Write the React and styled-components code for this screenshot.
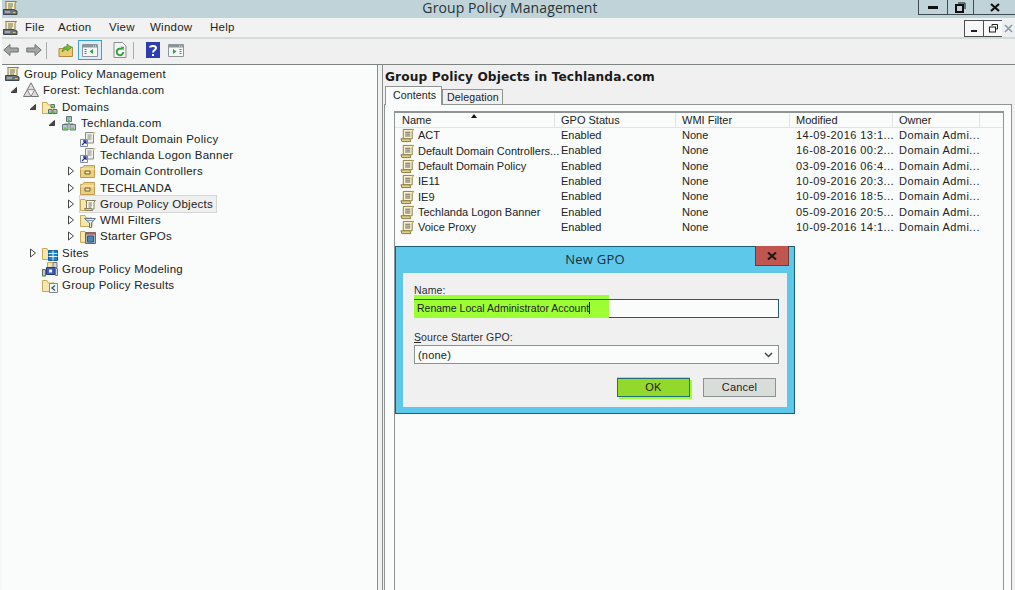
import React from 'react';
import styled, { createGlobalStyle } from 'styled-components';

const GlobalStyle = createGlobalStyle`
  html, body { margin: 0; padding: 0; background: #f0f0f0; }
  * { box-sizing: border-box; }
  body { font-family: "Liberation Sans", Arial, sans-serif; color: #222; }
`;

const Win = styled.div`
  position: relative;
  width: 1015px;
  height: 590px;
  overflow: hidden;
  display: flex;
  flex-direction: column;
  padding-left: 2px;
  background: #f7f9f8;
  font-size: 11.5px;
  letter-spacing: 0.25px;
`;

const TitleBar = styled.div`
  height: 18px;
  flex: none;
  display: flex;
  align-items: flex-start;
  background: #c0d3d8;
`;

const TitleIcon = styled.div`
  width: 16px;
  height: 16px;
  flex: none;
`;

const TitleText = styled.div`
  flex: 1;
  text-align: center;
  font-family: "Open Sans", sans-serif;
  font-size: 14px;
  line-height: 15px;
  letter-spacing: 0.1px;
  color: #2a3338;
  padding-left: 84px;
`;

const Caption = styled.div`
  display: flex;
  height: 15px;
  border-left: 1px solid #3d4a50;
  border-bottom: 1px solid #3d4a50;
`;

const CaptionBtn = styled.div`
  width: ${p => p.$w}px;
  display: flex;
  align-items: center;
  justify-content: center;
  border-left: ${p => (p.$first ? 'none' : '1px solid #3d4a50')};
`;

const MenuBar = styled.div`
  height: 21px;
  flex: none;
  display: flex;
  align-items: center;
  background: #f2f2f2;
  border-bottom: 2px solid #d4dad8;
`;

const MenuItems = styled.div`
  flex: 1;
  display: flex;
  align-items: center;
  margin: -1px 0 0 7px;
`;

const MenuItem = styled.span`
  width: ${p => p.$w}px;
`;

const ChildCaption = styled.div`
  display: flex;
  height: 17px;
  margin-bottom: -1px;
  background: #f0f0f0;
`;

const ChildBtn = styled.div`
  width: ${p => p.$w}px;
  display: flex;
  align-items: center;
  justify-content: center;
  background: ${p => (p.$off ? '#eceff0' : '#f8f8f8')};
  border: ${p => (p.$off ? 'none' : '1px solid #4a4f52')};
  margin-left: -1px;
`;

const Toolbar = styled.div`
  height: 26px;
  flex: none;
  display: flex;
  align-items: center;
  padding: 0 0 3px 1px;
  background: #f0f0f0;
  border-bottom: 1px solid #7d8482;
`;

const ToolBtn = styled.div`
  width: ${p => p.$w || 16}px;
  height: ${p => (p.$active ? 20 : 16)}px;
  margin-left: ${p => p.$ml || 0}px;
  flex: none;
  display: flex;
  align-items: center;
  justify-content: center;
  ${p => p.$active && 'background: #dcecf8; border: 1px solid #3b9fd8;'}
`;

const ToolSep = styled.div`
  width: 1px;
  height: 17px;
  margin-left: ${p => p.$ml}px;
  background: #a8acaa;
  flex: none;
`;

const Body = styled.div`
  flex: 1;
  display: flex;
  min-height: 0;
  background: #f0f0f0;
`;

const TreePane = styled.div`
  width: 376px;
  flex: none;
  background: #f9fcfa;
  border-right: 1px solid #8a8f8e;
  padding-top: 1px;
`;

const TreeRow = styled.div`
  height: 16.23px;
  display: flex;
  align-items: center;
  padding-left: ${p => 2 + 19 * p.$level}px;
  white-space: nowrap;
`;

const Twisty = styled.div`
  width: 13px;
  margin-left: -13px;
  flex: none;
  display: flex;
  justify-content: flex-start;
`;

const TreeLabel = styled.div`
  display: inline-flex;
  align-items: center;
  gap: 4px;
  height: 16px;
  padding-right: 3px;
  background: ${p => (p.$sel ? '#efefef' : 'transparent')};
  outline: ${p => (p.$sel ? '1px solid #d6d6d6' : 'none')};
`;

const DetailPane = styled.div`
  position: relative;
  flex: 1;
  margin: 0 3px 0 4px;
  border-left: 1px solid #8a8f8e;
  display: flex;
  flex-direction: column;
`;

const Heading = styled.div`
  height: 21px;
  padding: 5px 0 0 2px;
  font-family: "DejaVu Sans", sans-serif;
  font-weight: bold;
  font-size: 12.2px;
  line-height: 14px;
  letter-spacing: 0.1px;
  color: #1a1a1a;
`;

const Tabs = styled.div`
  display: flex;
  align-items: flex-end;
  height: 19px;
  padding-left: 2px;
  position: relative;
  z-index: 1;
  margin-bottom: -1px;
`;

const Tab = styled.div`
  width: ${p => p.$w}px;
  height: ${p => (p.$on ? 19 : 16)}px;
  padding: ${p => (p.$on ? '2px' : '1px')} 0 0 ${p => (p.$on ? 7 : 4)}px;
  background: ${p => (p.$on ? '#f9fcfa' : '#f0f0f0')};
  border: 1px solid #8f9593;
  border-bottom: ${p => (p.$on ? 'none' : '1px solid #8f9593')};
  font-size: 10.6px;
  letter-spacing: 0.1px;
`;

const TabBody = styled.div`
  flex: 1;
  background: #f9fcfa;
  border: 1px solid #8f9593;
  border-bottom: none;
  margin-left: 1px;
  padding: 6px 7px 0 9px;
  display: flex;
`;

const ListFrame = styled.div`
  flex: 1;
  border: 1px solid #8f9593;
  border-bottom: none;
  border-top-width: 2px;
  font-size: 11px;
  letter-spacing: 0;
`;

const cols = '160px 121px 114px 103px 87px 23px';

const ListHead = styled.div`
  display: grid;
  grid-template-columns: ${cols};
  height: 15px;
  border-bottom: 1px solid #dfe6e3;
`;

const HeadCell = styled.div`
  position: relative;
  padding-left: ${p => p.$pl || 6}px;
  line-height: 15px;
  border-right: 1px solid #dfe6e3;
`;

const SortMark = styled.div`
  position: absolute;
  left: 76px;
  top: 1px;
  width: 0;
  height: 0;
  border-left: 3.5px solid transparent;
  border-right: 3.5px solid transparent;
  border-bottom: 4px solid #111;
`;

const ListRow = styled.div`
  display: grid;
  grid-template-columns: ${cols};
  height: 15.35px;
  line-height: 15px;
  white-space: nowrap;
`;

const NameCell = styled.div`
  display: flex;
  align-items: center;
  gap: 3px;
  padding-left: 5px;
`;

const Cell = styled.div`
  padding-left: 6px;
  letter-spacing: ${p => (p.$wide ? '0.45px' : '0')};
`;

/* the New GPO dialog floats over the list */
const Dialog = styled.div`
  position: absolute;
  left: 12px;
  top: 181px;
  width: 400px;
  height: 168px;
  background: #5ec8ea;
  border: 1px solid #1c5f78;
  padding: 26px 7px 6px 7px;
  z-index: 5;
`;

const DialogTitle = styled.div`
  position: absolute;
  left: 0;
  right: 0;
  top: 4px;
  text-align: center;
  font-family: "Open Sans", sans-serif;
  font-size: 13px;
  line-height: 16px;
  color: #12303c;
`;

const CloseBtn = styled.div`
  position: absolute;
  right: 5px;
  top: -1px;
  width: 34px;
  height: 20px;
  background: #c0564f;
  border: 1px solid #6e3a36;
  border-top: none;
  display: flex;
  align-items: center;
  justify-content: center;
`;

const DialogBody = styled.div`
  height: 134px;
  background: #f0f0f0;
  padding: 9px 8px 0 11px;
  font-size: 11px;
  letter-spacing: 0.2px;
`;

const FieldLabel = styled.div`
  height: 16px;
  line-height: 16px;
  font-size: 10.5px;
  letter-spacing: 0.1px;
  color: #2c2c2c;
  u { text-decoration: underline; }
`;

const NameInput = styled.div`
  position: relative;
  height: 19px;
  margin: 1px 0 11px;
  background: #f9fcfa;
  border: 1px solid #1f5a85;
  padding-left: 2px;
  line-height: 17px;
  white-space: nowrap;
`;

const Marker = styled.div`
  position: absolute;
  left: -1px;
  top: -5px;
  width: 195px;
  height: 23px;
  background: #9cff33;
`;

const InputText = styled.span`
  position: relative;
  border-right: 1px solid #111;
  font-size: 10.5px;
  letter-spacing: 0;
`;

const InputLine = styled.div`
  position: absolute;
  left: -1px;
  top: -1px;
  width: 195px;
  height: 1px;
  background: #1f5a85;
`;

const SelectBox = styled.div`
  height: 19px;
  background: #f9fcfa;
  border: 1px solid #8d9290;
  display: flex;
  align-items: center;
  justify-content: space-between;
  padding: 0 5px 0 3px;
  margin-bottom: 14px;
`;

const Buttons = styled.div`
  display: flex;
  justify-content: flex-end;
  gap: 13px;
  padding-right: 3px;
`;

const Btn = styled.div`
  position: relative;
  width: 73px;
  height: 19px;
  line-height: 17px;
  text-align: center;
  background: ${p => (p.$ok ? '#93d92b' : '#d9ddda')};
  border: 1px solid ${p => (p.$ok ? '#1f6e7a' : '#8d9290')};
  box-shadow: ${p => (p.$ok ? '2px 2px 0 #9cff33, 0 -1px 0 #9cff33' : 'none')};
`;

const folder = (
  <path d="M.5 3.5V14.5H12V6H6.5L5 3.5z" fill="#f8e7ad" stroke="#c9a858" />
);

const server = (
  <>
    <path d="M9 5.5h3.5v3H9z" fill="#b8c4cc" stroke="#5f6f78" />
    <path d="M6.5 10.5H10v4H6.5zM11 10.5h4v4h-4z" fill="#b8c4cc" stroke="#5f6f78" />
    <path d="M10 7h1.5v1.3H10zM7.5 12.5H9v1.4H7.5zM12 12.5h1.5v1.4H12z" fill="#53d03c" />
  </>
);

const icons = {
  mmc: (
    <>
      <path d="M3.5 1.5h11l-1.5 2V10H4V2.5z" fill="#f4ecc4" stroke="#8d7f4d" />
      <path d="M6 4h5M6 6h5M6 8h4" stroke="#77715a" />
      <path d="M1.5 9.5h9.5l4 1.5v3.5H1.5z" fill="#6a787e" stroke="#39474d" />
      <path d="M3 12h5" stroke="#d0d8da" />
      <path d="M11 12.5h2.5" stroke="#e0c060" />
    </>
  ),
  forest: (
    <>
      <path d="M8 .8L15.5 14.5H.5z" fill="#dcdcdc" stroke="#777" />
      <path d="M4.3 7.7h7.4L8 14.4z" fill="#fafafa" stroke="#8a8a8a" />
    </>
  ),
  domains: (
    <>
      {folder}
      {server}
    </>
  ),
  domain: (
    <>
      <path d="M5.5 1.5h5v5h-5z" fill="#bac6ce" stroke="#66767f" />
      <path d="M6.5 3h3M6.5 4.5h1" stroke="#8193a0" />
      <path d="M8 6.5V9M3.5 9h9" stroke="#66767f" fill="none" />
      <path d="M1.5 9.5h5.5v5.5H1.5zM9 9.5h5.5v5.5H9z" fill="#bac6ce" stroke="#66767f" />
      <path d="M7 5h2v1.5H7zM3 12.5h2.5V14H3zM10.5 12.5H13V14h-2.5z" fill="#53d03c" />
    </>
  ),
  link: (
    <>
      <path d="M5.5 1.5h9.5l-1.5 2V12H5.5z" fill="#eeeeea" stroke="#8b8b82" />
      <path d="M7.5 4h4M7.5 6h4M7.5 8h4" stroke="#8b8b82" />
      <path d="M13 1h2v2h-2z" fill="#e4c774" />
      <path d="M.5 8.5h7v7h-7z" fill="#fafafa" stroke="#7f8a9c" />
      <path d="M2 14l3.5-3.5M3 10h3v3" stroke="#22329a" strokeWidth="1.3" fill="none" />
    </>
  ),
  ou: (
    <>
      <path d="M.5 4.5h2L4 2.5h10.5v12H.5z" fill="#edcf84" stroke="#c09d4c" />
      <path d="M.5 6h14" stroke="#f9ecc2" />
      <path d="M5 8h5v3H5z" fill="#f8e7ad" stroke="#6f5e2c" />
    </>
  ),
  gpoFolder: (
    <>
      {folder}
      <path d="M6.5 4.5h9l-1.5 1.5v7H6.5z" fill="#fdfdf4" stroke="#86805f" />
      <path d="M8.5 7h3.5M8.5 9h3.5M8.5 11h3" stroke="#6e6e60" />
      <path d="M4.5 12.5h7l1 2h-7z" fill="#eed88e" stroke="#86805f" />
    </>
  ),
  filter: (
    <>
      {folder}
      <path d="M4.5 6.5h11L11.5 11v4.5h-2V11z" fill="#e2e8ec" stroke="#5f7484" />
      <path d="M7 8.5h6" stroke="#7f9cb4" />
    </>
  ),
  starter: (
    <>
      {folder}
      <path d="M5.5 4.5h10v11h-10z" fill="#aeb9c4" stroke="#5d6b77" />
      <path d="M5.5 4.5h10v2h-10z" fill="#b65a45" />
      <path d="M7.5 8h6v6h-6z" fill="#4f83b6" stroke="#30587f" />
    </>
  ),
  sites: (
    <>
      {folder}
      <path d="M6.5 5.5h9v10h-9z" fill="#1b82d6" stroke="#125c98" />
      <path d="M6.5 8.5h9M6.5 11.5h9M11 5.5v10" stroke="#e2f2fc" />
    </>
  ),
  modeling: (
    <>
      <path d="M5.5 1.5h6v5h-6z" fill="#f8e7ad" stroke="#c9a858" />
      <path d="M11 1.5h4v5h-4z" fill="#d3d8dc" stroke="#6c787f" />
      <path d="M.5 8.5h3v6.5h-3z" fill="#c3c8c4" stroke="#5f6a66" />
      <path d="M4.5 6.5H13v7H4.5z" fill="#3f5fb8" stroke="#2a3b7c" />
      <path d="M7 8.5h3v3H7z" fill="#f6f6f6" />
      <path d="M13.5 7.5h2v7h-2z" fill="#cfd6da" stroke="#6c787f" />
      <path d="M.5 15h3" stroke="#53d03c" />
    </>
  ),
  results: (
    <>
      {folder}
      <path d="M7.5 6.5h8v9h-8z" fill="#f7f8f4" stroke="#818a8a" />
      <path d="M13 8.5L10 11l3 2.5" stroke="#2f4f94" strokeWidth="1.3" fill="none" />
    </>
  ),
  gpo: (
    <>
      <path d="M3.5 1.5h11L13 3.5V11.5H3.5z" fill="#f8f2d2" stroke="#83763f" />
      <path d="M5.5 4.5h5.5M5.5 6.5h5.5M5.5 8.5h5.5" stroke="#5e5a48" />
      <path d="M12.5 1.5h2L13 3.5z" fill="#e0c25e" />
      <path d="M1 11.5h9.5l1 3H2z" fill="#e5cf82" stroke="#83763f" />
    </>
  ),
};

function Icon({ name, size = 16 }) {
  return (
    <svg width={size} height={size} viewBox="0 0 16 16" style={{ flex: 'none' }}>
      {icons[name]}
    </svg>
  );
}

function Expander({ open }) {
  return (
    <Twisty>
      <svg width="8" height="10" viewBox="0 0 8 10">
        {open ? (
          <path d="M1 7.5L6.5 2.5v5z" fill="#4a4a4a" stroke="#3c3c3c" />
        ) : (
          <path d="M1.5 1l5 4-5 4z" fill="#fdfdfd" stroke="#4a4a4a" />
        )}
      </svg>
    </Twisty>
  );
}

function PaneIcon({ side }) {
  const left = side === 'left';
  return (
    <svg width="16" height="13" viewBox="0 0 16 13">
      <path d="M.5.5h15v12H.5z" fill="#f6f8f8" stroke="#8c979c" />
      <path d="M1 1h14v2.5H1z" fill="#8a959a" />
      <path d="M11 2h1M13 2h1" stroke="#e6ecee" />
      <path d={left ? 'M2.5 5.5h2M2.5 7.5h2M2.5 9.5h2' : 'M11.5 5.5h2M11.5 7.5h2M11.5 9.5h2'} stroke="#4d77a8" />
      <path d={left ? 'M11 5v5L7.5 7.5z' : 'M5 5v5l3.5-2.5z'} fill="#2fa53a" />
    </svg>
  );
}

const tree = [
  { level: 0, icon: 'mmc', label: 'Group Policy Management' },
  { level: 1, icon: 'forest', label: 'Forest: Techlanda.com', open: true },
  { level: 2, icon: 'domains', label: 'Domains', open: true },
  { level: 3, icon: 'domain', label: 'Techlanda.com', open: true },
  { level: 4, icon: 'link', label: 'Default Domain Policy' },
  { level: 4, icon: 'link', label: 'Techlanda Logon Banner' },
  { level: 4, icon: 'ou', label: 'Domain Controllers', open: false },
  { level: 4, icon: 'ou', label: 'TECHLANDA', open: false },
  { level: 4, icon: 'gpoFolder', label: 'Group Policy Objects', open: false, sel: true },
  { level: 4, icon: 'filter', label: 'WMI Filters', open: false },
  { level: 4, icon: 'starter', label: 'Starter GPOs', open: false },
  { level: 2, icon: 'sites', label: 'Sites', open: false },
  { level: 2, icon: 'modeling', label: 'Group Policy Modeling' },
  { level: 2, icon: 'results', label: 'Group Policy Results' },
];

const gpos = [
  ['ACT', '14-09-2016 13:1...'],
  ['Default Domain Controllers...', '16-08-2016 00:2...'],
  ['Default Domain Policy', '03-09-2016 06:4...'],
  ['IE11', '10-09-2016 20:3...'],
  ['IE9', '10-09-2016 18:5...'],
  ['Techlanda Logon Banner', '05-09-2016 20:5...'],
  ['Voice Proxy', '10-09-2016 14:1...'],
];

const menus = [['File', 33], ['Action', 51], ['View', 41], ['Window', 60], ['Help', 40]];

export default function App() {
  return (
    <Win>
      <GlobalStyle />
      <TitleBar>
        <TitleIcon><Icon name="mmc" /></TitleIcon>
        <TitleText>Group Policy Management</TitleText>
        <Caption>
          <CaptionBtn $w={28} $first>
            <svg width="10" height="4"><rect width="10" height="3" y="1" fill="#111" /></svg>
          </CaptionBtn>
          <CaptionBtn $w={26}>
            <svg width="11" height="11" viewBox="0 0 11 11">
              <path d="M3 1h7v6" fill="none" stroke="#111" />
              <rect x="1" y="3" width="7" height="7" fill="none" stroke="#111" strokeWidth="2" />
            </svg>
          </CaptionBtn>
          <CaptionBtn $w={42}>
            <svg width="10" height="9" viewBox="0 0 10 9">
              <path d="M1 1l8 7M9 1l-8 7" stroke="#111" strokeWidth="2.2" />
            </svg>
          </CaptionBtn>
        </Caption>
      </TitleBar>

      <MenuBar>
        <Icon name="mmc" />
        <MenuItems>
          {menus.map(([m, w]) => <MenuItem key={m} $w={w}>{m}</MenuItem>)}
        </MenuItems>
        <ChildCaption>
          <ChildBtn $w={20}>
            <svg width="7" height="7"><rect y="5" width="6" height="2" fill="#222" /></svg>
          </ChildBtn>
          <ChildBtn $w={20}>
            <svg width="9" height="9" viewBox="0 0 9 9">
              <path d="M3 2V.5h5.5V5H7" fill="none" stroke="#222" />
              <rect x=".5" y="3" width="6" height="5" fill="none" stroke="#222" />
            </svg>
          </ChildBtn>
          <ChildBtn $w={13} $off>
            <svg width="9" height="9" viewBox="0 0 9 9">
              <path d="M1 1l7 7M8 1l-7 7" stroke="#8b9aab" strokeWidth="1.6" />
            </svg>
          </ChildBtn>
        </ChildCaption>
      </MenuBar>

      <Toolbar>
        <ToolBtn>
          <svg width="16" height="14" viewBox="0 0 16 14"><path d="M.8 7L7 1.5V5h8.2v4H7v3.5z" fill="#a2a6a4" stroke="#6e7270" /></svg>
        </ToolBtn>
        <ToolBtn $ml={7}>
          <svg width="16" height="14" viewBox="0 0 16 14"><path d="M15.2 7L9 1.5V5H.8v4H9v3.5z" fill="#a2a6a4" stroke="#6e7270" /></svg>
        </ToolBtn>
        <ToolSep $ml={4} />
        <ToolBtn $ml={11}>
          <svg width="16" height="16" viewBox="0 0 16 16">
            <path d="M1 6.5h4l1-1.5h8.5v9.5H1z" fill="#eccb72" stroke="#b08d40" />
            <path d="M4 10c.5-3 2.5-5 5-5.5V2l4.5 3.5L9 9V7C7 7.3 5.5 8.5 4 10z" fill="#62c63e" stroke="#2e7d22" strokeWidth=".6" />
          </svg>
        </ToolBtn>
        <ToolBtn $w={24} $ml={4} $active><PaneIcon side="left" /></ToolBtn>
        <ToolBtn $ml={10}>
          <svg width="14" height="16" viewBox="0 0 14 16">
            <path d="M1 .5h8.5L13 4v11.5H1z" fill="#f4f4f4" stroke="#8a8f8e" />
            <path d="M10.3 10a3.3 3.3 0 1 1-1.3-2.7" fill="none" stroke="#2f9e36" strokeWidth="1.9" />
            <path d="M7.5 4.5l3.5.6-.7 3.4z" fill="#2f9e36" />
          </svg>
        </ToolBtn>
        <ToolSep $ml={5} />
        <ToolBtn $ml={11}>
          <svg width="14" height="16" viewBox="0 0 14 16">
            <rect width="14" height="16" fill="#2b3fb0" />
            <path d="M4 5.5C4 3.5 10 3 10 6c0 2-3 2-3 4.5" fill="none" stroke="#fff" strokeWidth="2" />
            <rect x="6" y="12" width="2" height="2" fill="#fff" />
          </svg>
        </ToolBtn>
        <ToolBtn $ml={7}><PaneIcon side="right" /></ToolBtn>
      </Toolbar>

      <Body>
        <TreePane>
          {tree.map(n => (
            <TreeRow key={n.label} $level={n.level}>
              {n.open !== undefined && <Expander open={n.open} />}
              <TreeLabel $sel={n.sel}>
                <Icon name={n.icon} />
                <span>{n.label}</span>
              </TreeLabel>
            </TreeRow>
          ))}
        </TreePane>

        <DetailPane>
          <Heading>Group Policy Objects in Techlanda.com</Heading>
          <Tabs>
            <Tab $w={57} $on>Contents</Tab>
            <Tab $w={61}>Delegation</Tab>
          </Tabs>
          <TabBody>
            <ListFrame>
              <ListHead>
                <HeadCell $pl={7}>Name<SortMark /></HeadCell>
                <HeadCell>GPO Status</HeadCell>
                <HeadCell>WMI Filter</HeadCell>
                <HeadCell>Modified</HeadCell>
                <HeadCell>Owner</HeadCell>
                <div />
              </ListHead>
              {gpos.map(([name, date]) => (
                <ListRow key={name}>
                  <NameCell><Icon name="gpo" size={15} />{name}</NameCell>
                  <Cell>Enabled</Cell>
                  <Cell>None</Cell>
                  <Cell $wide>{date}</Cell>
                  <Cell $wide>Domain Admi...</Cell>
                </ListRow>
              ))}
            </ListFrame>
          </TabBody>

          <Dialog>
            <DialogTitle>New GPO</DialogTitle>
            <CloseBtn>
              <svg width="10" height="8" viewBox="0 0 10 8">
                <path d="M1 .5l8 7M9 .5l-8 7" stroke="#1a1a1a" strokeWidth="2" />
              </svg>
            </CloseBtn>
            <DialogBody>
              <FieldLabel><u>N</u>ame:</FieldLabel>
              <NameInput>
                <Marker />
                <InputLine />
                <InputText>Rename Local Administrator Account</InputText>
              </NameInput>
              <FieldLabel><u>S</u>ource Starter GPO:</FieldLabel>
              <SelectBox>
                <span>(none)</span>
                <svg width="9" height="6" viewBox="0 0 9 6">
                  <path d="M1 1l3.5 3.5L8 1" fill="none" stroke="#444" strokeWidth="1.5" />
                </svg>
              </SelectBox>
              <Buttons>
                <Btn $ok>OK</Btn>
                <Btn>Cancel</Btn>
              </Buttons>
            </DialogBody>
          </Dialog>
        </DetailPane>
      </Body>
    </Win>
  );
}
